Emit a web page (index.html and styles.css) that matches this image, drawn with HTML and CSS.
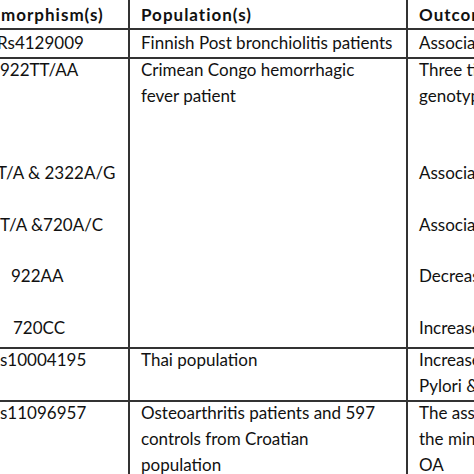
FILE: index.html
```html
<!DOCTYPE html>
<html>
<head>
<meta charset="utf-8">
<link rel="stylesheet" href="styles.css">
</head>
<body>
<table class="tbl">
  <colgroup>
    <col class="c1"><col class="c2"><col class="c3">
  </colgroup>
  <thead>
    <tr class="hdr">
      <th><span class="l i-h">morphism(s)</span></th>
      <th><span class="l">Population(s)</span></th>
      <th><span class="l">Outcome</span></th>
    </tr>
  </thead>
  <tbody>
    <tr class="r2">
      <td><span class="l i-a">Rs4129009</span></td>
      <td><span class="l">Finnish Post bronchiolitis patients</span></td>
      <td><span class="l">Associated with asthma</span></td>
    </tr>
    <tr class="r3">
      <td>
        <span class="l i-b">922TT/AA</span>
        <span class="l">&nbsp;</span>
        <span class="l">&nbsp;</span>
        <span class="l">&nbsp;</span>
        <span class="l i-c">T/A &amp; 2322A/G</span>
        <span class="l">&nbsp;</span>
        <span class="l i-d">T/A &amp;720A/C</span>
        <span class="l">&nbsp;</span>
        <span class="l i-e">922AA</span>
        <span class="l">&nbsp;</span>
        <span class="l i-f">720CC</span>
      </td>
      <td>
        <span class="l">Crimean Congo hemorrhagic</span>
        <span class="l">fever patient</span>
      </td>
      <td>
        <span class="l">Three times higher</span>
        <span class="l">genotype frequency</span>
        <span class="l">&nbsp;</span>
        <span class="l">&nbsp;</span>
        <span class="l">Associated with</span>
        <span class="l">&nbsp;</span>
        <span class="l">Associated with</span>
        <span class="l">&nbsp;</span>
        <span class="l">Decreased risk</span>
        <span class="l">&nbsp;</span>
        <span class="l">Increased risk</span>
      </td>
    </tr>
    <tr class="r4">
      <td><span class="l i-g">s10004195</span></td>
      <td><span class="l">Thai population</span></td>
      <td>
        <span class="l">Increased risk of H.</span>
        <span class="l">Pylori &amp; gastric</span>
      </td>
    </tr>
    <tr class="r5">
      <td><span class="l i-g">s11096957</span></td>
      <td>
        <span class="l">Osteoarthritis patients and 597</span>
        <span class="l">controls from Croatian</span>
        <span class="l">population</span>
      </td>
      <td>
        <span class="l">The association with</span>
        <span class="l">the minor allele of</span>
        <span class="l">OA</span>
      </td>
    </tr>
  </tbody>
</table>
</body>
</html>
```

FILE: styles.css
```css
html, body {
  margin: 0;
  padding: 0;
  background: #fff;
  overflow: hidden;
  width: 474px;
  height: 474px;
}

.tbl {
  font-family: Lato, "Open Sans", sans-serif;
  font-size: 17px;
  color: #111;
  border-collapse: collapse;
  table-layout: fixed;
  width: 700px;
  margin-left: -60px;
  margin-top: -4px;
}

.c1 { width: 188px; }
.c2 { width: 278px; }
.c3 { width: 234px; }

.tbl th,
.tbl td {
  border: 2px solid #333;
  padding: 0 0 0 11px;
  vertical-align: top;
  text-align: left;
  white-space: nowrap;
  overflow: hidden;
}

.tbl td:first-child,
.tbl th:first-child {
  padding-left: 0;
}

.l {
  display: block;
  line-height: 25.8px;
}

.r3 td > .l:first-child,
.r4 td > .l:first-child,
.r5 td > .l:first-child {
  margin-top: -2px;
}

.hdr th {
  font-weight: 700;
  letter-spacing: 1px;
  height: 32px;
  padding-top: 5px;
  box-sizing: border-box;
}

.hdr .l {
  line-height: 24px;
}

.r2 td { height: 27px; }
.r3 td { height: 290px; box-sizing: border-box; }
.r4 td { height: 53px; box-sizing: border-box; }
.r5 td { height: 90px; }

.i-h { padding-left: 59px; }
.i-a { padding-left: 55px; }
.i-b { padding-left: 58px; }
.i-c { padding-left: 55px; }
.i-d { padding-left: 58px; }
.i-e { padding-left: 69px; }
.i-f { padding-left: 71px; }
.i-g { padding-left: 58px; }
```
